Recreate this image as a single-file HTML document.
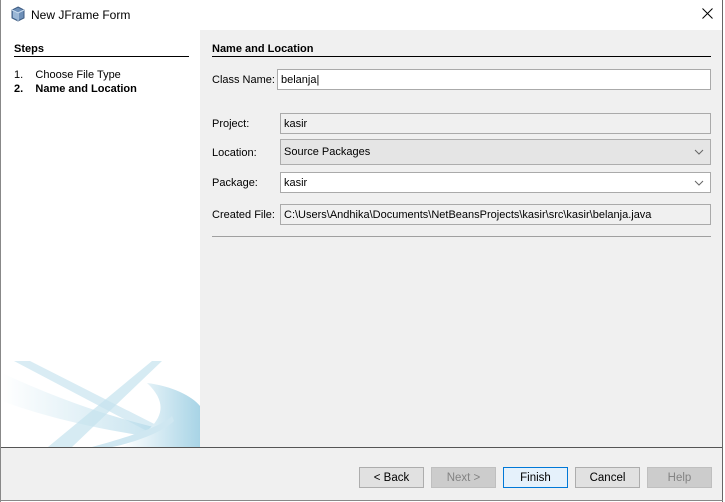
<!DOCTYPE html>
<html><head><style>
*{margin:0;padding:0;box-sizing:border-box}
body{width:725px;height:502px;background:#fff;font-family:"Liberation Sans",Tahoma,sans-serif;font-size:11px;color:#000;position:relative;overflow:hidden}
.a{position:absolute}
.f{position:absolute;border:1px solid #aaa;height:21px;line-height:20px;padding-left:3px;font-size:11px}
.lbl{position:absolute;left:212px;font-size:11px}
.btn{position:absolute;top:467px;width:65px;height:21px;border:1px solid #adadad;background:#e1e1e1;text-align:center;line-height:20px;font-size:11.5px}
.dis{background:#ccc;border-color:#bfbfbf;color:#838383}
.chev{position:absolute;right:6px;top:5px}
</style></head><body>
<div class="a" style="left:0;top:0;width:1px;height:502px;background:#888"></div>
<div class="a" style="left:722px;top:0;width:1px;height:502px;background:#666"></div>
<svg class="a" style="left:10px;top:6px" width="16" height="16" viewBox="0 0 16 16"><path d="M8 1 L14 4 L14 12 L8 15 L2 12 L2 4Z" fill="#6d8fb8" stroke="#3c5a80"/><path d="M2 4 L8 7 L14 4" fill="none" stroke="#cfe0f2"/><path d="M8 7 L8 15" stroke="#cfe0f2"/><path d="M3 5 L8 7.5 L8 14 L3 11.5Z" fill="#9bb7d6"/></svg>
<div class="a" style="left:31px;top:8px;font-size:12px">New JFrame Form</div>
<svg class="a" style="left:702px;top:8px" width="11" height="11"><path d="M0.5 0.5 L10.5 10.5 M10.5 0.5 L0.5 10.5" stroke="#000" stroke-width="1"/></svg>
<div class="a" style="left:200px;top:30px;width:522px;height:417px;background:#f0f0f0"></div>
<div class="a" style="left:14px;top:43px;font-weight:bold">Steps</div>
<div class="a" style="left:14px;top:56px;width:175px;height:1px;background:#000"></div>
<div class="a" style="left:14px;top:69px">1.&nbsp;&nbsp;&nbsp;&nbsp;Choose File Type</div>
<div class="a" style="left:14px;top:83px;font-weight:bold">2.&nbsp;&nbsp;&nbsp;&nbsp;Name and Location</div>
<svg class="a" style="left:2px;top:361px" width="198" height="86" viewBox="0 0 198 86">
<defs><linearGradient id="g" x1="0" x2="1"><stop offset="0" stop-color="#fff"/><stop offset="1" stop-color="#a8d4e6"/></linearGradient></defs>
<path d="M12 0 L28 0 L170 72 L160 78Z" fill="#cfe7f1" opacity=".8"/>
<path d="M0 12 C60 40 120 60 170 70 L165 78 C100 70 40 55 0 40Z" fill="url(#g)" opacity=".7"/>
<path d="M46 86 L150 0 L160 0 L70 86Z" fill="#c5e2ee" opacity=".7"/>
<path d="M145 22 C170 25 190 35 198 45 L198 86 L120 86 C150 70 175 50 145 22Z" fill="url(#g)"/>
<path d="M90 86 C130 75 160 65 170 55 L172 60 C160 72 130 82 110 86Z" fill="#cfe7f1"/>
</svg>
<div class="a" style="left:212px;top:43px;font-weight:bold">Name and Location</div>
<div class="a" style="left:212px;top:56px;width:499px;height:1px;background:#000"></div>
<div class="lbl" style="top:74px">Class Name:</div>
<div class="f" style="left:277px;top:69px;width:434px;background:#fff">belanja|</div>
<div class="lbl" style="top:118px">Project:</div>
<div class="f" style="left:280px;top:113px;width:431px;background:#f0f0f0">kasir</div>
<div class="lbl" style="top:147px">Location:</div>
<div class="f" style="left:280px;top:139px;width:431px;height:26px;line-height:25px;background:#e5e5e5;border-color:#adadad">Source Packages<svg class="chev" style="top:9px" width="10" height="6"><path d="M1 1 L5 5 L9 1" fill="none" stroke="#666"/></svg></div>
<div class="lbl" style="top:177px">Package:</div>
<div class="f" style="left:280px;top:172px;width:431px;background:#fff">kasir<svg class="chev" style="top:7px" width="10" height="6"><path d="M1 1 L5 5 L9 1" fill="none" stroke="#666"/></svg></div>
<div class="lbl" style="top:209px">Created File:</div>
<div class="f" style="left:280px;top:204px;width:431px;background:#f0f0f0">C:\Users\Andhika\Documents\NetBeansProjects\kasir\src\kasir\belanja.java</div>
<div class="a" style="left:212px;top:236px;width:499px;height:1px;background:#a0a0a0"></div>
<div class="a" style="left:1px;top:447px;width:721px;height:1px;background:#555"></div>
<div class="a" style="left:1px;top:448px;width:721px;height:52px;background:#f0f0f0"></div>
<div class="a" style="left:1px;top:500px;width:722px;height:1px;background:#888"></div>
<div class="btn" style="left:359px">&lt; Back</div>
<div class="btn dis" style="left:431px">Next &gt;</div>
<div class="btn" style="left:503px;background:#e5f1fb;border-color:#0078d7">Finish</div>
<div class="btn" style="left:575px">Cancel</div>
<div class="btn dis" style="left:647px">Help</div>
</body></html>
